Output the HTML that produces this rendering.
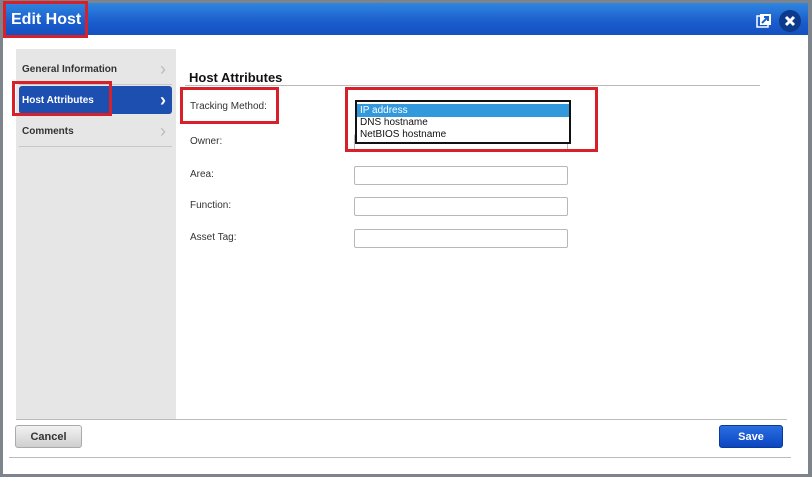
<!DOCTYPE html>
<html><head><style>
*{margin:0;padding:0;box-sizing:border-box}
body{width:812px;height:477px;background:#7d848c;position:relative;overflow:hidden;font-family:"Liberation Sans",Arial,sans-serif}
.a{position:absolute}
#win{left:3px;top:3px;width:805px;height:471px;background:#fff}
#hdr{left:3px;top:3px;width:805px;height:32px;background:linear-gradient(#2f86e0,#1a5ccc 60%,#1450c0)}
.red{position:absolute;border:3px solid #d8202a}
.lbl{font-size:10px;color:#333;position:absolute;left:190px}
.inp{position:absolute;left:354px;width:214px;height:19px;border:1px solid #b8b8b8;border-radius:2px;background:#fff}
.chev{position:absolute;left:160px;font-size:18px;color:#bbb;line-height:18px}
</style></head><body>
<div id="win" class="a"></div>
<div id="hdr" class="a"></div>
<div class="a" style="left:11px;top:11px;color:#fff;font-weight:bold;font-size:16px">Edit Host</div>
<div class="red" style="left:3px;top:1px;width:85px;height:37px"></div>
<svg class="a" style="left:756px;top:13px" width="16" height="16" viewBox="0 0 16 16"><rect x="1" y="3" width="11" height="11" fill="none" stroke="#fff" stroke-width="1.5"/><rect x="4" y="1" width="11" height="11" fill="#fff"/><path d="M6 10L12 4M8 4h4v4" stroke="#1a5ccc" stroke-width="2" fill="none"/></svg>
<div class="a" style="left:779px;top:10px;width:22px;height:22px;border-radius:50%;background:#0d3a8a"></div>
<svg class="a" style="left:784px;top:15px" width="12" height="12"><path d="M2 2L10 10M10 2L2 10" stroke="#fff" stroke-width="3"/></svg>

<div class="a" style="left:16px;top:49px;width:160px;height:370px;background:#e6e6e6"></div>
<div class="a" style="left:22px;top:64px;font-size:10px;font-weight:bold;color:#333">General Information</div>
<div class="chev" style="top:60px">›</div>
<div class="a" style="left:19px;top:84px;width:153px;height:1px;background:#c8c8c8"></div>
<div class="a" style="left:19px;top:86px;width:153px;height:28px;background:#1c4fb0;border-radius:3px"></div>
<div class="a" style="left:22px;top:95px;font-size:10px;font-weight:bold;color:#fff">Host Attributes</div>
<div class="chev" style="top:91px;color:#fff;font-weight:bold">›</div>
<div class="red" style="left:12px;top:81px;width:100px;height:35px"></div>
<div class="a" style="left:22px;top:126px;font-size:10px;font-weight:bold;color:#333">Comments</div>
<div class="chev" style="top:122px">›</div>
<div class="a" style="left:19px;top:146px;width:153px;height:1px;background:#c8c8c8"></div>

<div class="a" style="left:189px;top:70px;font-size:13px;font-weight:bold;color:#111">Host Attributes</div>
<div class="a" style="left:185px;top:85px;width:575px;height:1px;background:#bbb"></div>
<div class="lbl" style="top:101px">Tracking Method:</div>
<div class="red" style="left:180px;top:87px;width:99px;height:37px"></div>
<div class="lbl" style="top:136px">Owner:</div>
<div class="inp" style="top:134px;height:17px"></div>
<div class="lbl" style="top:169px">Area:</div>
<div class="inp" style="top:166px"></div>
<div class="lbl" style="top:200px">Function:</div>
<div class="inp" style="top:197px"></div>
<div class="lbl" style="top:232px">Asset Tag:</div>
<div class="inp" style="top:229px"></div>
<div class="a" style="left:355px;top:100px;width:216px;height:44px;border:2px solid #111;background:#fff;font-family:'Liberation Sans',sans-serif;font-size:10px;color:#111;padding-top:2px">
<div style="background:#3399dd;color:#fff;padding-left:3px;height:13px;line-height:13px">IP address</div>
<div style="padding-left:3px;height:12px;line-height:12px">DNS hostname</div>
<div style="padding-left:3px;height:12px;line-height:12px">NetBIOS hostname</div>
</div>
<div class="red" style="left:345px;top:87px;width:253px;height:65px"></div>

<div class="a" style="left:16px;top:419px;width:771px;height:1px;background:#bbb"></div>
<div class="a" style="left:15px;top:425px;width:67px;height:23px;border:1px solid #aaa;border-radius:3px;background:linear-gradient(#f2f2f2,#cfcfcf);font-size:11px;font-weight:bold;color:#333;text-align:center;line-height:22px">Cancel</div>
<div class="a" style="left:719px;top:425px;width:64px;height:23px;border:1px solid #0a3a9a;border-radius:3px;background:linear-gradient(#2a6ee0,#0c45c0);font-size:11px;font-weight:bold;color:#fff;text-align:center;line-height:22px">Save</div>
<div class="a" style="left:9px;top:457px;width:782px;height:1px;background:#bbb"></div>
</body></html>
